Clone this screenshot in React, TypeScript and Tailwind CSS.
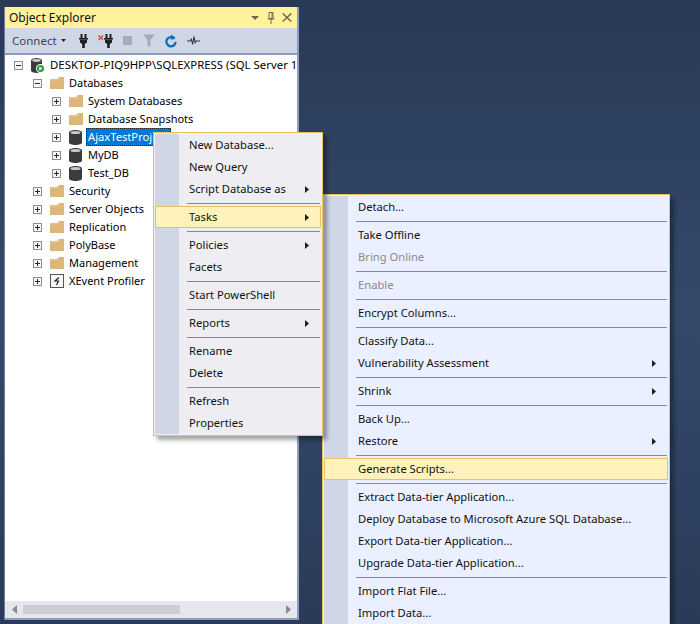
import React from "react";

const PlugIcon = () => (
  <svg width="9" height="14" viewBox="0 0 9 14">
    <path d="M1.500 0h2v4h2V0h2v4H9v1.500H0V4h1.500z" fill="#1e1e1e" />
    <path d="M1 5.500h7v3L5.800 10v4H3.200v-4L1 8.500z" fill="#1e1e1e" />
  </svg>
);

const PlugXIcon = () => (
  <svg width="15" height="14" viewBox="0 0 15 14">
    <path d="M.5 1.500l4.500 4.500M5 1.500L.5 6" stroke="#d1473c" strokeWidth="1.300" />
    <path d="M7.500 0h2v4h2V0h2v4H15v1.500H6V4h1.500z" fill="#1e1e1e" />
    <path d="M7 5.500h7v3L11.800 10v4H9.200v-4L7 8.500z" fill="#1e1e1e" />
  </svg>
);

const ExpBox = ({ open }: { open: boolean }) => (
  <svg width="9" height="9" viewBox="0 0 9 9" className="shrink-0">
    <rect x="0.5" y="0.5" width="8" height="8" fill="#f6f6f6" stroke="#8a8e9c" />
    <path d="M2 4.500h5" stroke="#2a2a2a" />
    {!open && <path d="M4.500 2v5" stroke="#2a2a2a" />}
  </svg>
);

const Folder = () => (
  <svg width="14" height="12" viewBox="0 0 14 12" className="shrink-0">
    <path d="M0 2h7l2-2h5v12H0z" fill="#dcb67a" />
    <path d="M1 3h7l2-2" fill="none" stroke="#e9cc9b" />
  </svg>
);

const Db = () => (
  <svg width="13" height="15" viewBox="0 0 13 15" className="shrink-0">
    <path d="M0 2.500C0 1 3 0 6.500 0S13 1 13 2.500v10C13 14 10 15 6.500 15S0 14 0 12.500z" fill="#3b3b3b" />
    <ellipse cx="6.500" cy="2.600" rx="5" ry="1.500" fill="#c9c9c9" />
  </svg>
);

const Server = () => (
  <svg width="14" height="15" viewBox="0 0 14 15" className="shrink-0">
    <path d="M0 2.500C0 1.100 2.500 0 5.500 0S11 1.100 11 2.500v10C11 13.900 8.500 15 5.500 15S0 13.900 0 12.500z" fill="#3c3c3c" />
    <ellipse cx="5.500" cy="2.500" rx="4.300" ry="1.400" fill="#c9c9c9" />
    <circle cx="9.500" cy="10.500" r="4.500" fill="#fff" />
    <circle cx="9.500" cy="10.500" r="3.600" fill="#2e9e3c" />
    <path d="M8.300 8.600l3 1.900-3 1.900z" fill="#fff" />
  </svg>
);

const XEvent = () => (
  <svg width="14" height="14" viewBox="0 0 14 14" className="shrink-0">
    <rect x="0.500" y="0.500" width="13" height="13" fill="#f7f7f7" stroke="#555" />
    <path d="M9 3.500L5 7h3.500L6.500 11" fill="none" stroke="#222" strokeWidth="1.200" />
  </svg>
);

type RowData = { label: string; level: number; icon: "server" | "folder" | "db" | "x"; open?: boolean; selected?: boolean };

const rows: RowData[] = [
  { label: "DESKTOP-PIQ9HPP\\SQLEXPRESS (SQL Server 1", level: 0, icon: "server", open: true },
  { label: "Databases", level: 1, icon: "folder", open: true },
  { label: "System Databases", level: 2, icon: "folder" },
  { label: "Database Snapshots", level: 2, icon: "folder" },
  { label: "AjaxTestProject", level: 2, icon: "db", selected: true },
  { label: "MyDB", level: 2, icon: "db" },
  { label: "Test_DB", level: 2, icon: "db" },
  { label: "Security", level: 1, icon: "folder" },
  { label: "Server Objects", level: 1, icon: "folder" },
  { label: "Replication", level: 1, icon: "folder" },
  { label: "PolyBase", level: 1, icon: "folder" },
  { label: "Management", level: 1, icon: "folder" },
  { label: "XEvent Profiler", level: 1, icon: "x" },
];

const Row = ({ r }: { r: RowData }) => {
  const pad = r.level === 0 ? "pl-[9px]" : r.level === 1 ? "pl-[28px]" : "pl-[47px]";
  return (
    <div className={`flex items-center h-[18px] whitespace-nowrap ${pad}`}>
      <ExpBox open={!!r.open} />
      <span className="w-[8px] shrink-0" />
      <span className="flex w-[19px] shrink-0">
        {r.icon === "server" ? <Server /> : r.icon === "folder" ? <Folder /> : r.icon === "db" ? <Db /> : <XEvent />}
      </span>
      {r.selected ? (
        <span className="bg-[#0078d7] text-white h-[18px] leading-[16px] px-[1px] -ml-[2px] border border-dotted border-[#222] w-[85px] overflow-hidden shrink-0">
          {r.label}
        </span>
      ) : (
        <span className={r.level === 0 ? "text-[11.4px]" : "text-[11px]"}>{r.label}</span>
      )}
    </div>
  );
};

type Item = { t?: string; arrow?: boolean; disabled?: boolean; hot?: boolean; sep?: boolean };

const menu1: Item[] = [
  { t: "New Database..." },
  { t: "New Query" },
  { t: "Script Database as", arrow: true },
  { sep: true },
  { t: "Tasks", arrow: true, hot: true },
  { sep: true },
  { t: "Policies", arrow: true },
  { t: "Facets" },
  { sep: true },
  { t: "Start PowerShell" },
  { sep: true },
  { t: "Reports", arrow: true },
  { sep: true },
  { t: "Rename" },
  { t: "Delete" },
  { sep: true },
  { t: "Refresh" },
  { t: "Properties" },
];

const menu2: Item[] = [
  { t: "Detach..." },
  { sep: true },
  { t: "Take Offline" },
  { t: "Bring Online", disabled: true },
  { sep: true },
  { t: "Enable", disabled: true },
  { sep: true },
  { t: "Encrypt Columns..." },
  { sep: true },
  { t: "Classify Data..." },
  { t: "Vulnerability Assessment", arrow: true },
  { sep: true },
  { t: "Shrink", arrow: true },
  { sep: true },
  { t: "Back Up..." },
  { t: "Restore", arrow: true },
  { sep: true },
  { t: "Generate Scripts...", hot: true },
  { sep: true },
  { t: "Extract Data-tier Application..." },
  { t: "Deploy Database to Microsoft Azure SQL Database..." },
  { t: "Export Data-tier Application..." },
  { t: "Upgrade Data-tier Application..." },
  { sep: true },
  { t: "Import Flat File..." },
  { t: "Import Data..." },
];

const Menu = ({ items, className }: { items: Item[]; className: string }) => (
  <div className={`absolute border border-[#e5c365] p-[1px] shadow-[4px_4px_4px_rgba(0,0,0,0.35)] ${className}`}>
    <div className="relative">
      <div className="absolute left-0 top-0 bottom-0 w-[24px] bg-[#cfd6e5]" />
      {items.map((it, i) =>
        it.sep ? (
          <div key={i} className="relative h-[6px] flex items-center pl-[32px] pr-[1px]">
            <div className="h-[1px] w-full bg-[#868999]" />
          </div>
        ) : (
          <div
            key={i}
            className={`relative h-[22px] flex items-center ${
              it.hot ? "bg-[#fff2bd] border border-[#e5c365] pl-[33px] pr-[11px]" : "pl-[34px] pr-[12px]"
            } ${it.disabled ? "text-[#8a8a8a]" : "text-[#111]"}`}
          >
            <span className="flex-1 whitespace-nowrap">{it.t}</span>
            {it.arrow && (
              <svg width="4" height="7" viewBox="0 0 4 7" className="shrink-0">
                <path d="M0 0l4 3.500L0 7z" fill="#1e1e1e" />
              </svg>
            )}
          </div>
        )
      )}
    </div>
  </div>
);

export default function App() {
  return (
    <div className="relative w-[700px] h-[624px] overflow-hidden pl-[4px] pt-[7px] pb-[4px] pr-[401px] bg-gradient-to-b from-[#293a57] via-[#35496b] to-[#2a3b59] text-[11.2px] text-[#111] font-['Noto_Sans',sans-serif]">
      <div className="flex flex-col h-[613px] border-l border-[#6f7d99] border-r-2 border-r-[#8e9bbc]">
        <div className="h-[21px] bg-[#fff29d] flex items-center pl-[4px] pr-[5px] text-[12px]">
          <span className="flex-1">Object Explorer</span>
          <svg width="8" height="4" viewBox="0 0 8 4" className="mr-[8px]">
            <path d="M0 0h8L4 4z" fill="#6d6a4d" />
          </svg>
          <svg width="8" height="12" viewBox="0 0 8 12" className="mr-[7px]">
            <path d="M2 .5h4v6H2zM.5 7h7M4 7v5M5 1v5" fill="none" stroke="#6d6a4d" />
          </svg>
          <svg width="10" height="9" viewBox="0 0 10 9">
            <path d="M.7.500l8.600 8M9.300.500L.7 8.500" stroke="#6d6a4d" strokeWidth="1.500" />
          </svg>
        </div>
        <div className="h-[25px] bg-[#cfd6e5] flex items-center pl-[7px] text-[#39445e] text-[11.5px]">
          <span>Connect</span>
          <svg width="5" height="3" viewBox="0 0 5 3" className="ml-[4px] mr-[13px]">
            <path d="M0 0h5L2.500 3z" fill="#222" />
          </svg>
          <span className="flex mr-[10px]"><PlugIcon /></span>
          <span className="flex mr-[10px]"><PlugXIcon /></span>
          <svg width="9" height="9" viewBox="0 0 9 9" className="mr-[11px]">
            <rect width="9" height="9" fill="#a5abb8" />
          </svg>
          <svg width="12" height="13" viewBox="0 0 13 13" className="mr-[10px]">
            <path d="M0 0h13L8 6v7H5V6z" fill="#a5abb8" />
          </svg>
          <svg width="12" height="14" viewBox="0 0 13 14" className="mr-[10px]">
            <path d="M10.300 4.500A5 5 0 1 0 11.500 8" fill="none" stroke="#0e6cb5" strokeWidth="2.400" />
            <path d="M6.500 0v6l4.800-2.500z" fill="#0e6cb5" />
          </svg>
          <svg width="13" height="11" viewBox="0 0 15 11">
            <path d="M0 6h3.500l1.500-2 1.500 6L8 1l1.500 7 1-2H15" fill="none" stroke="#333" strokeWidth="1.200" />
          </svg>
        </div>
        <div className="flex-1 min-h-0 flex flex-col border-t-2 border-[#8e9bbc] bg-white overflow-hidden">
          <div className="flex-1 min-h-0 pt-px overflow-hidden text-black">
            {rows.map((r) => (
              <Row key={r.label} r={r} />
            ))}
          </div>
          <div className="h-[17px] bg-[#e6e7ed] flex items-center pl-[7px] pr-[6px]">
            <svg width="5" height="9" viewBox="0 0 5 9">
              <path d="M5 0v9L0 4.500z" fill="#868999" />
            </svg>
            <div className="ml-[6px] h-[9px] w-[157px] bg-[#cdced3]" />
            <span className="flex-1" />
            <svg width="5" height="9" viewBox="0 0 5 9">
              <path d="M0 0v9l5-4.500z" fill="#868999" />
            </svg>
          </div>
        </div>
        <div className="h-[2px] bg-[#8e9bbc]" />
      </div>
      <Menu items={menu2} className="left-[322px] top-[194px] w-[348px] bg-[#eaf0ff]" />
      <Menu items={menu1} className="left-[153px] top-[132px] w-[170px] bg-[#eeeef2]" />
    </div>
  );
}
